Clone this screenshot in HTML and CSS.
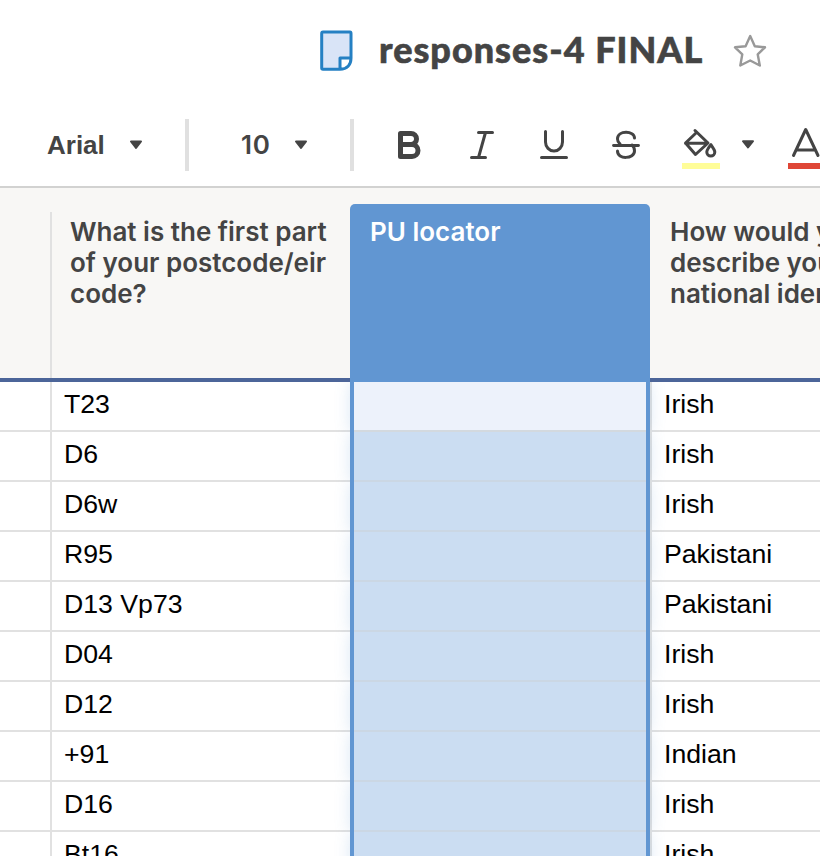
FILE: index.html
```html
<!DOCTYPE html>
<html lang="en">
<head>
    <meta charset="UTF-8">
    <title>responses-4 FINAL</title>
    <link rel="stylesheet" href="styles.css">
</head>
<body>
    <header class="title-bar">
        <svg class="sheet-icon" width="34" height="42" viewBox="0 0 34 42">
            <path d="M3 2H31V29C31 35 27 39.500 21 39.500H3Q1.500 39.500 1.500 38V3.500Q1.500 2 3 2Z" fill="#d9e4f7"/>
            <path d="M20 39V28H31C31 34 27 39 20 39Z" fill="#fff"/>
            <path d="M3 2H30Q31 2 31 3.500V28C31 35 27 39.300 20 39.300H3Q1.700 39.300 1.700 38V3.500Q1.700 2 3 2ZM20 39V28H31" fill="none" stroke="#2580c3" stroke-width="3" stroke-linejoin="round"/>
        </svg>
        <h1 class="title">responses-4 FINAL</h1>
        <svg class="star-icon" width="34" height="36" viewBox="0 0 34 36">
            <path d="M17.200 3L21.800 13.200L32 14.300L24.700 21.300L26.800 32.500L17.200 27.500L7.300 32.500L9.300 21.300L2 14.300L12.600 13.200Z" fill="none" stroke="#999" stroke-width="2.400" stroke-linejoin="round"/>
        </svg>
    </header>

    <nav class="toolbar">
        <div class="picker font-picker">
            <span>Arial</span>
            <svg class="caret" width="14" height="10" viewBox="0 0 14 10"><path d="M2 1.500H12L7 8Z"/></svg>
        </div>
        <div class="picker size-picker">
            <span>10</span>
            <svg class="caret" width="14" height="10" viewBox="0 0 14 10"><path d="M2 1.500H12L7 8Z"/></svg>
        </div>
        <div class="tools">
            <svg width="402" height="52" viewBox="0 0 402 52">
                <g fill="none" stroke="#444" stroke-width="3" stroke-linecap="round" stroke-linejoin="round">
                    <!-- bold -->
                    <path d="M46.500 14.500H57A5.500 5.500 0 0 1 57 25.500H46.500ZM46.500 25.500H58A6 6 0 0 1 58 37.500H46.500Z" stroke-width="5"/>
                    <!-- italic -->
                    <path d="M124.500 13.500H138.500M117.500 38.500H131.500M131.500 13.500L124.500 38.500"/>
                    <!-- underline -->
                    <path d="M191.500 12.500V23A8.500 9 0 0 0 208.500 23V12.500M187.500 38.500H212.500"/>
                    <!-- strikethrough -->
                    <path d="M280.500 19C280.500 11.500 263.500 11 263.500 20Q263.500 23 266 25M263.500 32C263.500 41 280.500 40 280.500 32Q280.500 28 278 26"/>
                    <path d="M259.500 26.500H284.500" stroke-width="2.800"/>
                    <!-- fill -->
                    <path d="M341 11.500L354 24L341.500 35.500L331.500 24L342 14M331.500 24.200H353.500"/>
                    <path d="M356.800 25.700C354.500 29 352.800 31 352.800 33A4 4 0 0 0 360.800 33C360.800 31 359 29 356.800 25.700Z"/>
                </g>
                <rect x="328" y="44" width="38" height="6" fill="#fffd98"/>
                <path d="M389 22.200H399L394 28.500Z" fill="#444" stroke="#444" stroke-width="2" stroke-linejoin="round"/>
            </svg>
            <svg class="text-color" width="32" height="52" viewBox="0 0 32 52">
                <path d="M5.500 36.500L17.700 10.500L30 36.500M10 31H26" fill="none" stroke="#444" stroke-width="3" stroke-linecap="round" stroke-linejoin="round"/>
                <rect x="0" y="44" width="36" height="6" fill="#df4636"/>
            </svg>
        </div>
    </nav>

    <main class="sheet">
        <section class="column gutter">
            <div class="head"></div>
            <div class="cell"></div>
            <div class="cell"></div>
            <div class="cell"></div>
            <div class="cell"></div>
            <div class="cell"></div>
            <div class="cell"></div>
            <div class="cell"></div>
            <div class="cell"></div>
            <div class="cell"></div>
            <div class="cell"></div>
        </section>
        <section class="column postcode">
            <div class="head">What is the first part<br>of your postcode/eir<br>code?</div>
            <div class="cell">T23</div>
            <div class="cell">D6</div>
            <div class="cell">D6w</div>
            <div class="cell">R95</div>
            <div class="cell">D13 Vp73</div>
            <div class="cell">D04</div>
            <div class="cell">D12</div>
            <div class="cell">+91</div>
            <div class="cell">D16</div>
            <div class="cell">Bt16</div>
        </section>
        <section class="column selected">
            <div class="head">PU locator</div>
            <div class="cell active"></div>
            <div class="cell"></div>
            <div class="cell"></div>
            <div class="cell"></div>
            <div class="cell"></div>
            <div class="cell"></div>
            <div class="cell"></div>
            <div class="cell"></div>
            <div class="cell"></div>
            <div class="cell"></div>
        </section>
        <section class="column identity">
            <div class="head">How would you<br>describe your<br>national identity?</div>
            <div class="cell">Irish</div>
            <div class="cell">Irish</div>
            <div class="cell">Irish</div>
            <div class="cell">Pakistani</div>
            <div class="cell">Pakistani</div>
            <div class="cell">Irish</div>
            <div class="cell">Irish</div>
            <div class="cell">Indian</div>
            <div class="cell">Irish</div>
            <div class="cell">Irish</div>
        </section>
    </main>
</body>
</html>
```
FILE: styles.css
```css
* {
    box-sizing: border-box;
}

body {
    margin: 0;
    height: 856px;
    overflow: hidden;
    background: #fff;
    color: #444;
    font-family: Inter, "Liberation Sans", sans-serif;
}

.title-bar {
    display: flex;
    align-items: center;
    height: 102px;
    padding-left: 320px;
}

.title {
    width: 324px;
    margin: 0 30px 0 25px;
    padding-bottom: 5px;
    font-family: Lato, sans-serif;
    font-size: 36px;
    font-weight: 900;
    line-height: 44px;
    letter-spacing: 1px;
    -webkit-text-stroke: .6px #444;
    white-space: nowrap;
}

.sheet-icon,
.star-icon {
    flex: none;
}

.toolbar {
    display: flex;
    height: 86px;
    padding-top: 17px;
    border-bottom: 2px solid #d2d2d1;
    overflow: hidden;
}

.picker {
    display: flex;
    flex: none;
    align-items: center;
    height: 52px;
    border-right: 4px solid #e0e0e0;
    font-size: 26px;
    font-weight: 600;
}

.font-picker {
    width: 189px;
    padding-left: 47px;
    font-family: "Liberation Sans", Arial, sans-serif;
    font-weight: 700;
}

.font-picker .caret {
    margin-left: 24px;
}

.size-picker {
    width: 165px;
    padding-left: 52px;
}

.size-picker span {
    padding-bottom: 1px;
    letter-spacing: .7px;
}

.size-picker .caret {
    margin-left: 23px;
}

.caret {
    fill: #444;
    stroke: #444;
    stroke-width: 2;
    stroke-linejoin: round;
}

.tools {
    display: flex;
    flex: none;
}

.text-color {
    margin-left: 32px;
}

.sheet {
    display: flex;
    width: 820px;
    height: 668px;
    overflow: hidden;
    background: #f8f7f5;
}

.column {
    flex: none;
}

.head {
    height: 194px;
    padding: 28px 0 0 18px;
    border-bottom: 4px solid #4c6599;
    font-size: 26px;
    font-weight: 600;
    line-height: 31px;
    white-space: nowrap;
}

.cell {
    height: 50px;
    padding-left: 12px;
    border-bottom: 2px solid #e1e1e1;
    background: #fff;
    color: #000;
    font-family: "Liberation Sans", Arial, sans-serif;
    font-size: 26.67px;
    line-height: 44px;
    white-space: nowrap;
}

.gutter {
    width: 52px;
}

.gutter .head {
    background: linear-gradient(#e1e1e1, #e1e1e1) no-repeat 50px 24px / 2px 166px;
}

.gutter .cell {
    border-right: 2px solid #e1e1e1;
}

.postcode {
    width: 298px;
}

.selected {
    position: relative;
    width: 300px;
}

.selected .head {
    height: 178px;
    margin-top: 16px;
    padding: 12px 0 0 20px;
    border: 0;
    border-radius: 5px 5px 0 0;
    background: #6196d2;
    color: #fff;
}

.selected .cell {
    border-right: 4px solid #6196d2;
    border-left: 4px solid #6196d2;
    border-bottom: 0;
    background: linear-gradient(#cbd7e4, #cbd7e4) no-repeat 0 48px / 100% 2px, #cbddf2;
    box-shadow: 0 0 16px rgba(97, 150, 210, .22);
    clip-path: inset(0 -16px);
}

.selected .active {
    background: linear-gradient(#d3d9df, #d3d9df) no-repeat 0 48px / 100% 2px, #edf2fb;
}

.identity {
    width: 350px;
}

.identity .head {
    padding-left: 20px;
}

.identity .cell {
    border-left: 2px solid #e1e1e1;
}
```
